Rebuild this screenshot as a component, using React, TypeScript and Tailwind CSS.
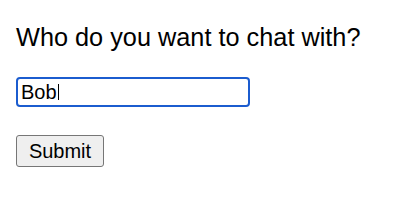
import { useState } from "react";

export default function App() {
  const [name, setName] = useState("Bob");
  const [focused, setFocused] = useState(false);

  return (
    <div className="min-h-screen bg-white px-4 pt-[23px] font-['Liberation_Sans',Arial,sans-serif] text-black">
      <h1 className="text-[25.3px] leading-[29px]">Who do you want to chat with?</h1>
      <form className="mt-[25px] flex flex-col items-start" onSubmit={(e) => e.preventDefault()}>
        <div className="relative">
          <input
            className="h-[30px] w-[234px] rounded-[4px] border-2 border-[#1b5ccf] pl-[3px] pr-[4px] text-[20px] leading-[24px] outline-none"
            type="text"
            name="name"
            value={name}
            onChange={(e) => setName(e.target.value)}
            onFocus={() => setFocused(true)}
            onBlur={() => setFocused(false)}
          />
          {/* caret as in the screenshot */}
          {!focused && name === "Bob" && (
            <span className="pointer-events-none absolute left-[41.5px] top-[7px] h-[16px] w-px bg-black" />
          )}
        </div>
        <button
          type="submit"
          className="mt-[28px] h-[32px] w-[88px] rounded-[3px] border border-[#767676] bg-[#efefef] text-[20px] leading-[24px]"
        >
          Submit
        </button>
      </form>
    </div>
  );
}
